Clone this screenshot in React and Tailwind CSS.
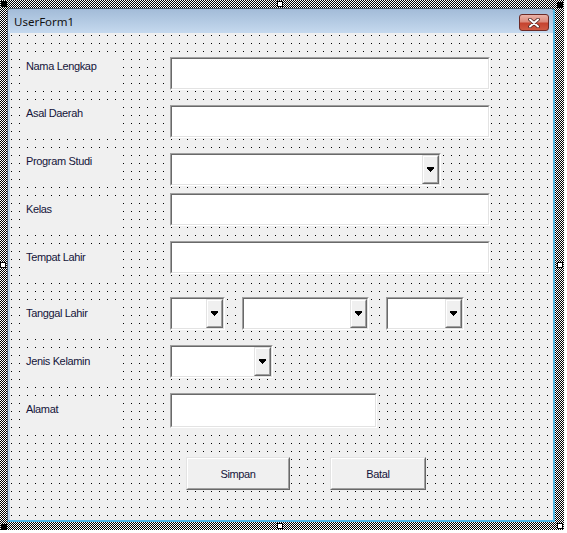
import React from 'react';

// classic 3D edges of the VBA designer
const sunkenOuter = 'border border-t-[#a0a0a0] border-l-[#a0a0a0] border-r-white border-b-white';
const sunkenInner = 'h-full border border-t-[#696969] border-l-[#696969] border-r-[#e3e3e3] border-b-[#e3e3e3] bg-white';
const raisedOuter = 'border border-t-[#e3e3e3] border-l-[#e3e3e3] border-r-[#696969] border-b-[#696969]';
const raisedInner = 'h-full border border-t-white border-l-white border-r-[#a0a0a0] border-b-[#a0a0a0] bg-[#f0f0f0]';

const uiFont = "font-['Liberation_Sans',Arial,sans-serif] text-[11px] leading-[13px] tracking-[-0.35px] text-[#14143a]";

const Label = ({ text, className = '' }) => (
  <div className={`w-[100px] h-[32px] bg-[#f0f0f0] pl-[6px] pt-[4px] ${uiFont} ${className}`}>{text}</div>
);

const TextBox = ({ w, h = 'h-[33px]' }) => (
  <div className={`${w} ${h} ${sunkenOuter}`}>
    <div className={sunkenInner} />
  </div>
);

const DropButton = () => (
  <div className={`w-[17px] h-full ${raisedOuter}`}>
    <div className={`${raisedInner} flex items-center justify-center`}>
      <svg width="7" height="5" viewBox="0 0 7 5" shapeRendering="crispEdges">
        <path d="M0 0h7v2h-1v1h-1v1h-1v1h-1v-1h-1v-1h-1v-1h-1z" fill="#000" />
      </svg>
    </div>
  </div>
);

const ComboBox = ({ w, className = '' }) => (
  <div className={`${w} h-[33px] ${sunkenOuter} ${className}`}>
    <div className={`${sunkenInner} flex`}>
      <div className="flex-1" />
      <DropButton />
    </div>
  </div>
);

const Button = ({ w, label, className = '' }) => (
  <div className={`${w} h-[33px] ${raisedOuter} ${className}`}>
    <div className={`${raisedInner} flex items-center justify-center pt-[1px] ${uiFont}`}>{label}</div>
  </div>
);

const Handle = ({ className, filled }) => (
  <div
    className={`absolute w-[6px] h-[6px] border border-black ${filled ? 'bg-black' : 'bg-white'} ${className}`}
  />
);

const CloseButton = () => (
  <div className="mt-[5px] mr-[4px] w-[30px] h-[17px] rounded-[3px] border border-[#6b2a26] bg-[linear-gradient(180deg,#eab3a8_0%,#dc8a7b_45%,#c6432f_55%,#cf5a43_100%)] flex items-center justify-center">
    <svg width="12" height="10" viewBox="0 0 12 10">
      <path d="M2 1.5 L10 8.5 M10 1.5 L2 8.5" stroke="#4a2420" strokeWidth="3.6" strokeLinecap="round" />
      <path d="M2 1.5 L10 8.5 M10 1.5 L2 8.5" stroke="#ffffff" strokeWidth="2" strokeLinecap="round" />
    </svg>
  </div>
);

export default function App() {
  return (
    <div className="relative w-[567px] h-[533px] bg-white overflow-hidden">
      <div className="w-[564px] h-[530px] pt-[8px] pl-[7px] bg-[repeating-conic-gradient(#000_0_25%,#fff_0_50%)] bg-[length:2px_2px]">
        <div className="w-[548px] h-[514px] flex flex-col rounded-t-[4px] overflow-hidden border-t border-l border-t-[#4e5a6a] border-l-[#4e5a6a] border-r-2 border-b-2 border-r-[#52b6e4] border-b-[#52b6e4]">
          {/* title bar */}
          <div className="h-[24px] shrink-0 flex justify-between bg-[linear-gradient(180deg,#a2bbd8,#c5d9ee)]">
            <div className="pl-[6px] pt-[5px] font-['Noto_Sans','Open_Sans',sans-serif] text-[11.5px] leading-[16px] text-[#111]">
              UserForm1
            </div>
            <CloseButton />
          </div>

          {/* client area with the design grid */}
          <div className="flex-1 border-l-2 border-l-[#b9d1ea] bg-[#f0f0f0] bg-[conic-gradient(at_1px_1px,transparent_75%,#000_0)] bg-[length:8px_8px] bg-[position:1px_2px] pt-[23px] pl-[10px] flex flex-col">
            <div className="h-[47px] flex items-start">
              <Label text="Nama Lengkap" />
              <div className="ml-[50px] mt-[1px]"><TextBox w="w-[320px]" /></div>
            </div>
            <div className="h-[48px] flex items-start">
              <Label text="Asal Daerah" />
              <div className="ml-[50px] mt-[2px]"><TextBox w="w-[320px]" /></div>
            </div>
            <div className="h-[42px] flex items-start">
              <Label text="Program Studi" />
              <div className="ml-[50px] mt-[2px]"><ComboBox w="w-[271px]" /></div>
            </div>
            <div className="h-[48px] flex items-start">
              <Label text="Kelas" className="mt-[6px]" />
              <div className="ml-[50px]"><TextBox w="w-[320px]" /></div>
            </div>
            <div className="h-[56px] flex items-start">
              <Label text="Tempat Lahir" className="mt-[6px]" />
              <div className="ml-[50px]"><TextBox w="w-[320px]" /></div>
            </div>
            <div className="h-[48px] flex items-start">
              <Label text="Tanggal Lahir" className="mt-[6px]" />
              <div className="ml-[50px] flex">
                <ComboBox w="w-[55px]" />
                <ComboBox w="w-[127px]" className="ml-[17px]" />
                <ComboBox w="w-[78px]" className="ml-[17px]" />
              </div>
            </div>
            <div className="h-[48px] flex items-start">
              <Label text="Jenis Kelamin" className="mt-[6px]" />
              <div className="ml-[50px]"><ComboBox w="w-[103px]" /></div>
            </div>
            <div className="h-[64px] flex items-start">
              <Label text="Alamat" className="mt-[6px]" />
              <div className="ml-[50px]"><TextBox w="w-[207px]" h="h-[35px]" /></div>
            </div>
            <div className="flex ml-[166px]">
              <Button w="w-[104px]" label="Simpan" />
              <Button w="w-[96px]" label="Batal" className="ml-[40px]" />
            </div>
          </div>
        </div>
      </div>

      {/* selection handles */}
      <Handle filled className="left-[1px] top-[1px]" />
      <Handle className="left-[277px] top-[1px]" />
      <Handle filled className="left-[557px] top-[2px]" />
      <Handle className="left-[0px] top-[262px]" />
      <Handle className="left-[557px] top-[262px]" />
      <Handle filled className="left-[1px] top-[524px]" />
      <Handle className="left-[277px] top-[523px]" />
      <Handle className="left-[557px] top-[523px]" />
    </div>
  );
}
